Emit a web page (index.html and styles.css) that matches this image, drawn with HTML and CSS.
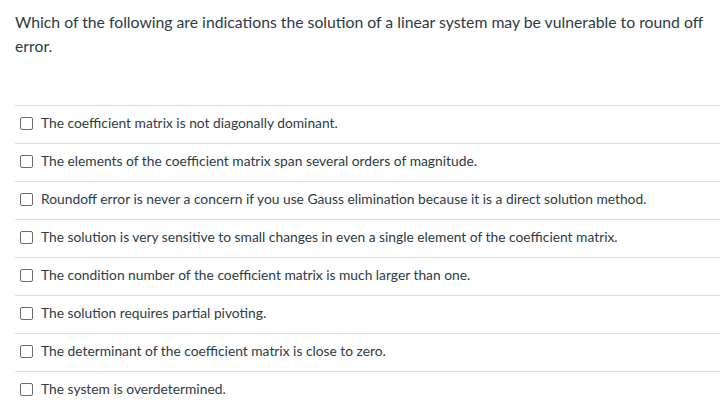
FILE: index.html
```html
<!DOCTYPE html>
<html>
<head>
<meta charset="utf-8">
<link rel="stylesheet" href="styles.css">
</head>
<body>
<div class="quiz">
  <p class="question">Which of the following are indications the solution of a linear system may be vulnerable to round off error.</p>
  <ul class="answers">
    <li class="answer"><span class="box"></span><span class="label">The coefficient matrix is not diagonally dominant.</span></li>
    <li class="answer"><span class="box"></span><span class="label">The elements of the coefficient matrix span several orders of magnitude.</span></li>
    <li class="answer"><span class="box"></span><span class="label">Roundoff error is never a concern if you use Gauss elimination because it is a direct solution method.</span></li>
    <li class="answer"><span class="box"></span><span class="label">The solution is very sensitive to small changes in even a single element of the coefficient matrix.</span></li>
    <li class="answer"><span class="box"></span><span class="label">The condition number of the coefficient matrix is much larger than one.</span></li>
    <li class="answer"><span class="box"></span><span class="label">The solution requires partial pivoting.</span></li>
    <li class="answer"><span class="box"></span><span class="label">The determinant of the coefficient matrix is close to zero.</span></li>
    <li class="answer"><span class="box"></span><span class="label">The system is overdetermined.</span></li>
  </ul>
</div>
</body>
</html>
```
FILE: styles.css
```css
html, body {
  margin: 0;
  padding: 0;
  background: #ffffff;
}
body {
  font-family: Lato, "Liberation Sans", sans-serif;
  color: #2d3b45;
}
.quiz {
  padding: 10px 0 0 15px;
}
.question {
  margin: 0 0 47px 0;
  font-size: 15.75px;
  line-height: 24px;
  padding-right: 3px;
}
.answers {
  list-style: none;
  margin: 0;
  padding: 0;
}
.answer {
  display: flex;
  align-items: center;
  gap: 8px;
  height: 37px;
  border-top: 1px solid #dcdcdc;
  padding-left: 5px;
  font-size: 13.8px;
}
.box {
  width: 11px;
  height: 11px;
  border: 1px solid #6b6b6b;
  border-radius: 2px;
  flex: none;
  margin-top: -2px;
}
.label {
  line-height: 16px;
  margin-top: -3px;
}
```
